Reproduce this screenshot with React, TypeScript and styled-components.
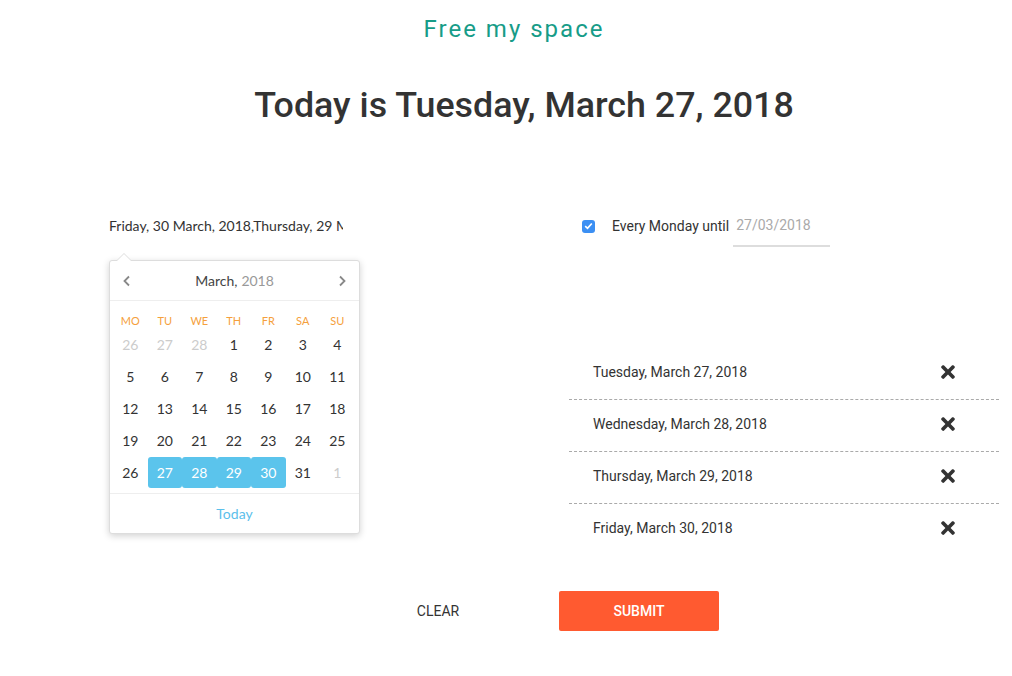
import React from "react";
import styled, { createGlobalStyle } from "styled-components";
import { FaTimes } from "react-icons/fa";

const Global = createGlobalStyle`
  html, body { margin: 0; padding: 0; background: #fff; }
  body { font-family: Roboto, "Liberation Sans", sans-serif; color: #333; }
  * { box-sizing: border-box; }
`;

const Page = styled.div`
  width: 1012px;
  min-height: 676px;
  display: flex;
  flex-direction: column;
`;

const Brand = styled.div`
  margin-top: 13px;
  padding-left: 16px;
  text-align: center;
  font-size: 24px;
  line-height: 32px;
  letter-spacing: 2px;
  color: #179c88;
`;

const Heading = styled.h1`
  margin: 38px 0 0;
  padding-left: 36px;
  text-align: center;
  font-size: 35.8px;
  line-height: 44px;
  font-weight: 500;
  color: #333;
`;

const Columns = styled.div`
  margin-top: 89px;
  padding-left: 109px;
  display: grid;
  grid-template-columns: 460px 430px;
  align-items: start;
`;

const LeftCol = styled.div`
  display: flex;
  flex-direction: column;
`;

const DateInput = styled.div`
  width: 234px;
  height: 20px;
  line-height: 20px;
  font-family: Lato, "Noto Sans", sans-serif;
  font-size: 14px;
  color: #333;
  white-space: nowrap;
  overflow: hidden;
`;

const Calendar = styled.div`
  position: relative;
  margin-top: 24px;
  width: 251px;
  background: #fff;
  border: 1px solid #ddd;
  border-radius: 3px;
  box-shadow: 0 2px 7px rgba(0, 0, 0, 0.18);
  font-family: Lato, "Noto Sans", sans-serif;
  &::before {
    content: "";
    position: absolute;
    top: -8px;
    left: 6px;
    border-left: 8px solid transparent;
    border-right: 8px solid transparent;
    border-bottom: 8px solid #ddd;
  }
  &::after {
    content: "";
    position: absolute;
    top: -7px;
    left: 7px;
    border-left: 7px solid transparent;
    border-right: 7px solid transparent;
    border-bottom: 7px solid #fff;
  }
`;

const CalHeader = styled.div`
  height: 40px;
  display: flex;
  align-items: center;
  justify-content: space-between;
  padding: 0 12px;
  border-bottom: 1px solid #eee;
`;

const NavArrow = styled.span`
  display: flex;
  align-items: center;
  color: #888;
`;

const MonthLabel = styled.div`
  font-size: 14px;
  color: #444;
  span { color: #999; margin-left: 4px; }
`;

const Grid = styled.div`
  padding: 11px 3px 4px;
  display: grid;
  grid-template-columns: repeat(7, 34.5px);
  grid-template-rows: 17px repeat(5, 32px);
  border-bottom: 1px solid #eee;
`;

const WeekDay = styled.div`
  display: flex;
  align-items: center;
  justify-content: center;
  font-size: 11px;
  color: #f5a03c;
`;

const Day = styled.div<{ $muted?: boolean; $selected?: boolean }>`
  display: flex;
  align-items: center;
  justify-content: center;
  font-size: 14px;
  margin: 0 0 1px;
  border-radius: 3px;
  color: ${(p) => (p.$selected ? "#fff" : p.$muted ? "#ccc" : "#333")};
  background: ${(p) => (p.$selected ? "#5bc4ec" : "transparent")};
`;

const TodayLink = styled.div`
  height: 39px;
  display: flex;
  align-items: center;
  justify-content: center;
  font-size: 14px;
  color: #5bc0eb;
`;

const RightCol = styled.div`
  display: flex;
  flex-direction: column;
`;

const RepeatRow = styled.div`
  height: 20px;
  display: flex;
  align-items: center;
  padding-left: 13px;
  font-size: 14px;
  color: #333;
`;

const Check = styled.span`
  width: 13px;
  height: 13px;
  border-radius: 3px;
  background: #3b8ff3;
  display: inline-flex;
  align-items: center;
  justify-content: center;
  margin-right: 17px;
`;

const UntilInput = styled.div`
  margin-left: 4px;
  width: 97px;
  height: 40px;
  padding: 10px 0 0 3px;
  align-self: flex-start;
  margin-top: -9px;
  border-bottom: 2px solid #ddd;
  color: #aaa;
  font-size: 14px;
`;

const List = styled.div`
  margin-top: 112px;
  display: flex;
  flex-direction: column;
`;

const Row = styled.div<{ $last?: boolean }>`
  height: 52px;
  display: flex;
  align-items: center;
  justify-content: space-between;
  padding: 0 44px 4px 24px;
  font-size: 14px;
  color: #333;
  border-bottom: ${(p) => (p.$last ? "none" : "1px dashed #aaa")};
`;

const Remove = styled.span`
  display: flex;
  color: #333;
  margin-right: -3px;
`;

const Actions = styled.div`
  margin-top: 35px;
  padding-left: 358px;
  display: flex;
  align-items: center;
  gap: 41px;
`;

const Button = styled.button<{ $primary?: boolean }>`
  width: 160px;
  height: 40px;
  border: none;
  border-radius: 2px;
  font-family: Roboto, "Liberation Sans", sans-serif;
  font-size: 14px;
  font-weight: ${(p) => (p.$primary ? 500 : 400)};
  text-transform: uppercase;
  color: ${(p) => (p.$primary ? "#fff" : "#333")};
  background: ${(p) => (p.$primary ? "#ff5a30" : "transparent")};
`;

const Chevron = ({ dir }: { dir: "left" | "right" }) => (
  <svg width="10" height="12" viewBox="0 0 10 12">
    <path
      d={dir === "left" ? "M7 1.5 L2.5 6 L7 10.5" : "M3 1.5 L7.5 6 L3 10.5"}
      fill="none"
      stroke="#888"
      strokeWidth="1.8"
    />
  </svg>
);

const weekdays = ["MO", "TU", "WE", "TH", "FR", "SA", "SU"];
type Cell = { d: number; muted?: boolean; sel?: boolean };
const cells: Cell[] = [
  { d: 26, muted: true },
  { d: 27, muted: true },
  { d: 28, muted: true },
  ...Array.from({ length: 31 }, (_, i) => ({ d: i + 1, sel: i + 1 >= 27 && i + 1 <= 30 })),
  { d: 1, muted: true },
];

const dates = [
  "Tuesday, March 27, 2018",
  "Wednesday, March 28, 2018",
  "Thursday, March 29, 2018",
  "Friday, March 30, 2018",
];

export default function App() {
  return (
    <Page>
      <Global />
      <Brand>Free my space</Brand>
      <Heading>Today is Tuesday, March 27, 2018</Heading>
      <Columns>
        <LeftCol>
          <DateInput>Friday, 30 March, 2018,Thursday, 29 March, 2018,Wednesday, 28 March, 2018</DateInput>
          <Calendar>
            <CalHeader>
              <NavArrow><Chevron dir="left" /></NavArrow>
              <MonthLabel>March,<span>2018</span></MonthLabel>
              <NavArrow><Chevron dir="right" /></NavArrow>
            </CalHeader>
            <Grid>
              {weekdays.map((w) => (
                <WeekDay key={w}>{w}</WeekDay>
              ))}
              {cells.map((c, i) => (
                <Day key={i} $muted={c.muted} $selected={c.sel}>{c.d}</Day>
              ))}
            </Grid>
            <TodayLink>Today</TodayLink>
          </Calendar>
        </LeftCol>
        <RightCol>
          <RepeatRow>
            <Check>
              <svg width="9" height="8" viewBox="0 0 9 8">
                <path d="M1.2 4.2 L3.5 6.3 L7.8 1.5" fill="none" stroke="#fff" strokeWidth="1.7" />
              </svg>
            </Check>
            Every Monday until
            <UntilInput>27/03/2018</UntilInput>
          </RepeatRow>
          <List>
            {dates.map((d, i) => (
              <Row key={d} $last={i === dates.length - 1}>
                {d}
                <Remove><FaTimes size={20} /></Remove>
              </Row>
            ))}
          </List>
        </RightCol>
      </Columns>
      <Actions>
        <Button>Clear</Button>
        <Button $primary>Submit</Button>
      </Actions>
    </Page>
  );
}
